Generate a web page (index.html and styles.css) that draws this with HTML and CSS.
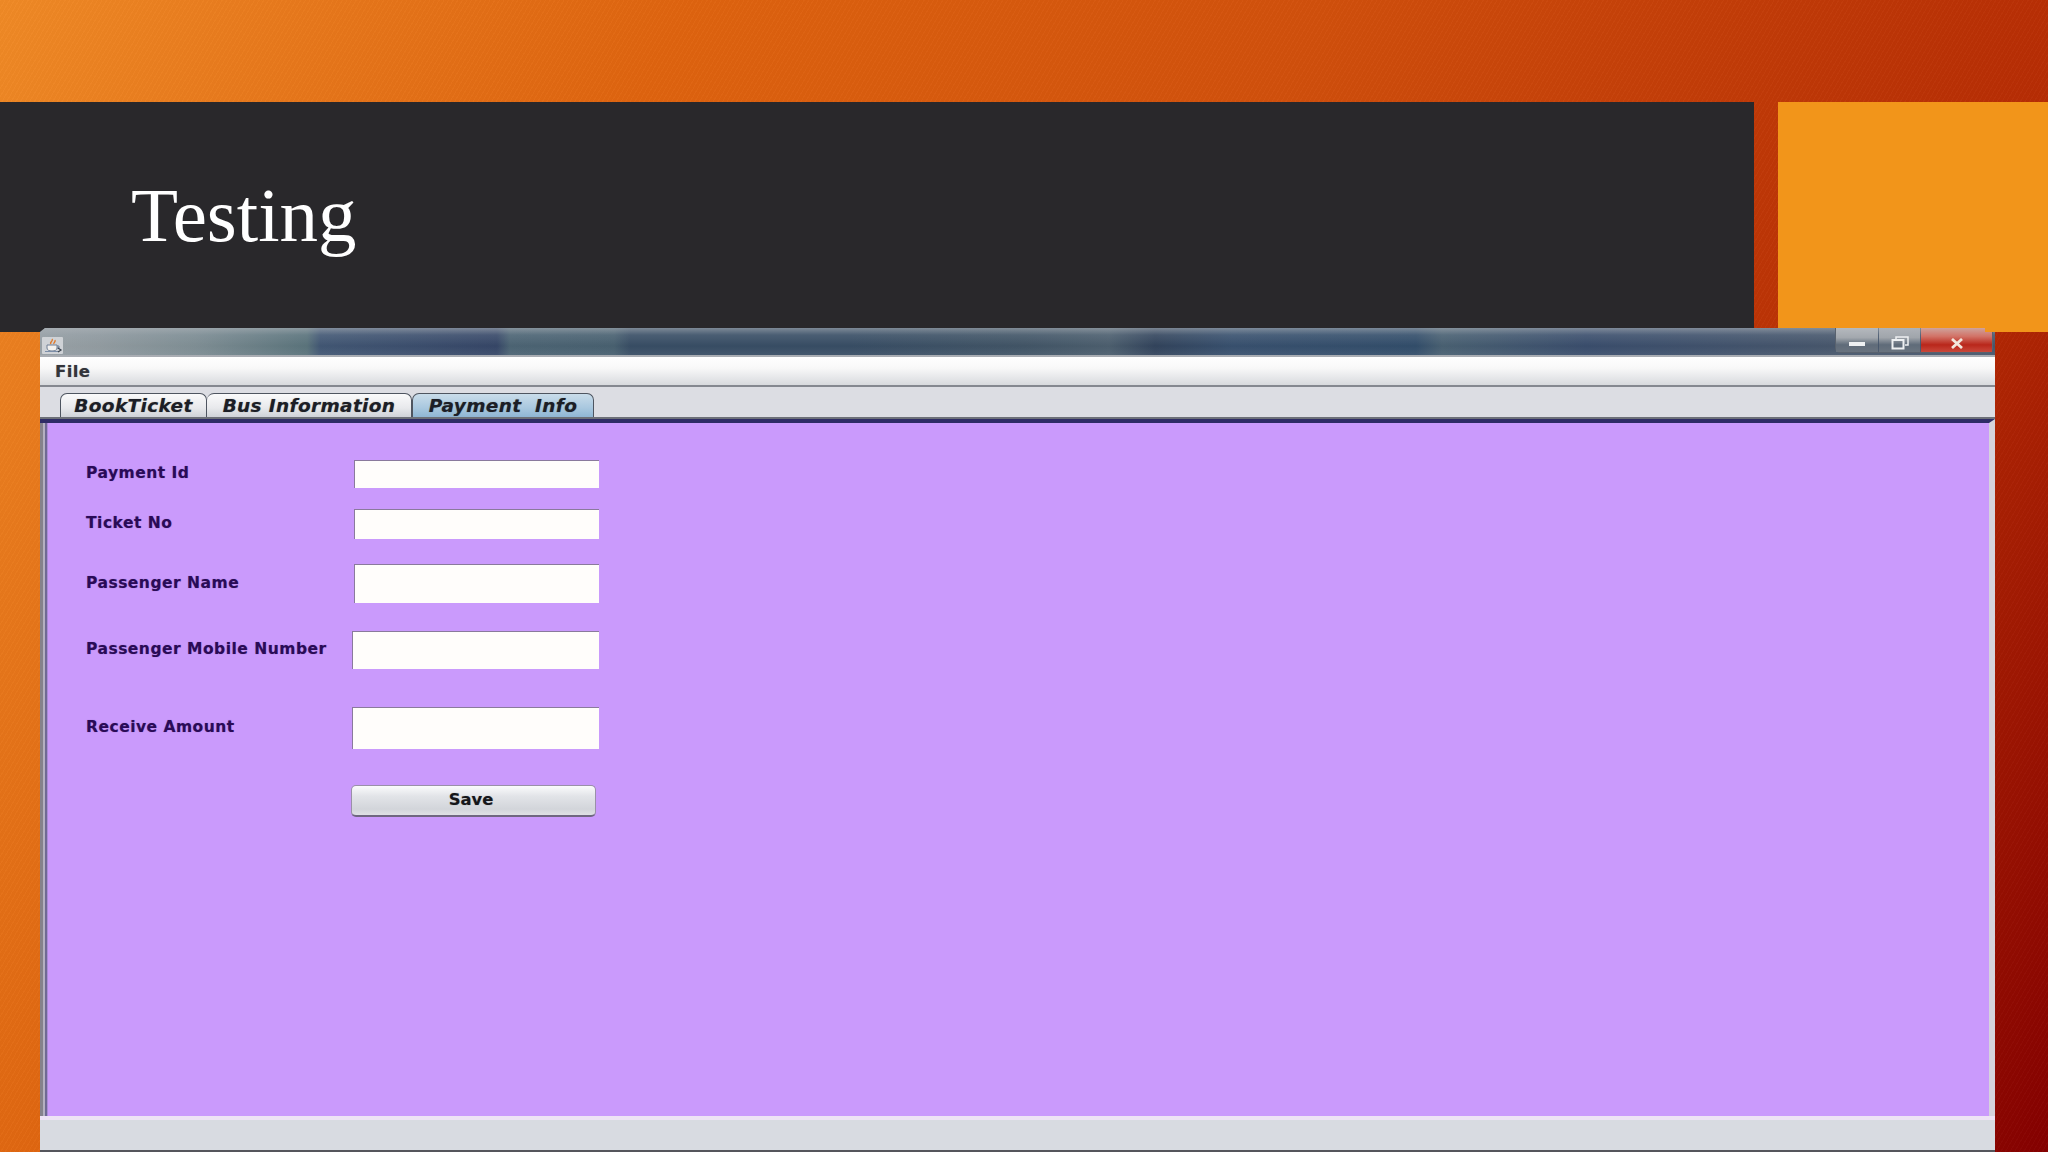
FILE: index.html
```html
<!DOCTYPE html>
<html lang="en">
<head>
<meta charset="utf-8">
<title>Testing</title>
<link rel="stylesheet" href="styles.css">
</head>
<body>
<div class="slide">
  <header class="head">
    <div class="banner"><h1 class="title">Testing</h1></div>
    <div class="accent"></div>
  </header>
  <section class="window">
    <div class="titlebar">
      <svg class="java-icon" viewBox="0 0 21 17" aria-hidden="true">
        <rect x="0" y="0" width="21" height="17" rx="1" fill="#cfd2d6"/>
        <path d="M10 2c2 2-3 3-1 5M13 3c1 2-2 3-1 4" fill="none" stroke="#e07a2c" stroke-width="1.4"/>
        <path d="M5 8h10v3c0 2-2 3-5 3s-5-1-5-3z" fill="#f3f1ee" stroke="#6f7f95" stroke-width="1"/>
        <path d="M15 9h2v2h-2" fill="none" stroke="#6f7f95"/>
        <path d="M3 14.500h13" stroke="#7c8ea8" stroke-width="1"/>
        <path d="M16 11l3 2-3 2" fill="none" stroke="#38404c" stroke-width="1.200"/>
      </svg>
      <div class="controls">
        <div class="ctl ctl-min"><span class="min-glyph"></span></div>
        <div class="ctl ctl-max">
          <svg class="max-glyph" viewBox="0 0 18 14" aria-hidden="true">
            <path d="M5 3V1h12v8h-3" fill="none" stroke="#eef0f2" stroke-width="1.500"/>
            <rect x="1.500" y="4" width="11" height="8.500" fill="none" stroke="#eef0f2" stroke-width="2"/>
          </svg>
        </div>
        <div class="ctl ctl-close">
          <svg class="close-glyph" viewBox="0 0 14 11" aria-hidden="true">
            <path d="M2 1l10 9M12 1L2 10" stroke="#f2e6dc" stroke-width="2.800" fill="none"/>
          </svg>
        </div>
      </div>
    </div>
    <nav class="menubar"><span class="menu-item">File</span></nav>
    <div class="tabstrip">
      <div class="tab tab-book">BookTicket</div>
      <div class="tab tab-bus">Bus Information</div>
      <div class="tab tab-pay">Payment  Info</div>
    </div>
    <div class="tabframe">
      <form class="panel">
        <div class="row row-1"><label class="lbl">Payment Id</label><input class="field" type="text"></div>
        <div class="row row-2"><label class="lbl">Ticket No</label><input class="field" type="text"></div>
        <div class="row row-3"><label class="lbl">Passenger Name</label><input class="field" type="text"></div>
        <div class="row row-4"><label class="lbl lbl-wide">Passenger Mobile Number</label><input class="field" type="text"></div>
        <div class="row row-5"><label class="lbl lbl-wide">Receive Amount</label><input class="field" type="text"></div>
        <div class="row row-6"><span class="lbl lbl-btn"></span><button class="save" type="button">Save</button></div>
      </form>
    </div>
    <div class="statusbar"></div>
  </section>
</div>
</body>
</html>
```
FILE: styles.css
```css
* { box-sizing: border-box; }
html, body { margin: 0; padding: 0; }
body { width: 2048px; height: 1152px; overflow: hidden; }

.slide {
  width: 2048px;
  height: 1152px;
  overflow: hidden;
  display: flex;
  flex-direction: column;
  background:
    repeating-linear-gradient(120deg, rgba(255,255,255,.02) 0 1px, rgba(0,0,0,.015) 1px 4px),
    linear-gradient(118deg, #f08a26 0%, #df640f 26%, #d1500c 50%, #b62b04 80%, #850000 100%);
}

.head { display: flex; gap: 24px; padding-top: 102px; height: 332px; flex: none; }
.banner { width: 1754px; height: 230px; background: #29282b; display: flex; align-items: center; padding-left: 131px; padding-bottom: 3px; }
.title { margin: 0; font: 400 77px/1 "Liberation Serif", serif; color: #fff; }
.accent { flex: 1; height: 230px; background: #f2951a; }

.window {
  width: 1955px;
  height: 824px;
  margin: -4px 0 0 40px;
  display: flex;
  flex-direction: column;
  position: relative;
  flex: none;
}

.titlebar {
  height: 29px;
  flex: none;
  position: relative;
  clip-path: polygon(0 4px, 5px 0, 1945px 0, 1945px 4px, 100% 4px, 100% 100%, 0 100%);
  border-bottom: 2px solid #a9adb3;
  background:
    linear-gradient(180deg, rgba(170,176,182,.6) 0, rgba(140,150,160,.2) 7px, rgba(0,0,0,.05) 18px, rgba(120,130,140,.15) 27px),
    linear-gradient(90deg, #a0a8ad 0, #98a2a7 60px, #84949a 156px, #5e7880 267px, #445a78 280px, #38496b 457px, #4f6878 470px, #4b6474 574px, #3a5068 590px, #3a5068 810px, #44586a 984px, #4f6272 1069px, #34465f 1115px, #3a5372 1193px, #34506e 1376px, #4c6476 1402px, #3c5070 1546px, #4a5a70 1794px);
}

.java-icon { position: absolute; left: 2px; top: 9px; width: 21px; height: 17px; display: block; }

.controls {
  position: absolute;
  right: 2px;
  top: 0;
  width: 158px;
  height: 25px;
  display: flex;
  gap: 1px;
  border: 1px solid #59626e;
  border-top: 0;
  border-radius: 0 0 5px 5px;
}
.ctl { display: flex; align-items: center; justify-content: center; padding-top: 6px; }
.ctl-min { width: 42px; background: linear-gradient(180deg, #b5b9be, #a3a8ae 40%, #5f6b79 70%, #69737f); }
.ctl-max { width: 41px; background: linear-gradient(180deg, #aeb2b8, #a0a5ab 40%, #5f6b79 70%, #6a747f); }
.ctl-close { flex: 1; background: linear-gradient(180deg, #cfa39c, #d27266 35%, #b9271b 70%, #c9483b); }
.min-glyph { width: 16px; height: 4px; background: #eef0f2; margin-top: 2px; }
.max-glyph { width: 18px; height: 14px; display: block; }
.close-glyph { width: 14px; height: 11px; display: block; }

.menubar {
  height: 30px;
  flex: none;
  background: linear-gradient(180deg, #ffffff 0, #f8f8f8 40%, #d8dade 100%);
  border-bottom: 2px solid #858890;
  display: flex;
  align-items: center;
  padding: 2px 0 0 15px;
}
.menu-item { font: 700 16.500px/1 "DejaVu Sans", sans-serif; letter-spacing: .4px; color: #33343a; text-shadow: 0 0 1px rgba(50,50,58,.45); }

.tabstrip {
  height: 32px;
  flex: none;
  background: #dcdde3;
  border-bottom: 2px solid #6d7078;
  display: flex;
  align-items: flex-end;
  padding-left: 20px;
}
.tab {
  height: 24px;
  border: 1px solid #4e5560;
  border-bottom: 0;
  border-left-width: 0;
  border-radius: 7px 7px 0 0;
  font: italic 700 18.500px/24px "DejaVu Sans", sans-serif;
  letter-spacing: .35px;
  color: #1c1e26;
  white-space: pre;
  text-align: center;
  text-shadow: 0 0 1px rgba(28,30,38,.45);
  background: linear-gradient(180deg, #fafafb 0, #e8e9ec 60%, #cfd2d8 100%);
}
.tab-book { width: 147px; border-left-width: 1px; }
.tab-bus { width: 205px; }
.tab-pay { width: 182px; background: linear-gradient(180deg, #c9dcea 0, #a9c8df 60%, #8fb6d4 100%); border-left-width: 1px; }

.tabframe {
  flex: 1;
  min-height: 0;
  display: flex;
  flex-direction: column;
  padding-left: 8px;
  background: linear-gradient(90deg, #85828c 0 3px, #b4b0c0 3px 5px, #6f6a94 5px 7px, #a98cd8 7px 8px);
  border-right: 6px solid #d5d3dc;
  border-top: 4px solid #2e2c66;
}
.panel {
  flex: 1;
  background: #ca9afc;
  padding: 37px 0 0 38px;
  display: flex;
  flex-direction: column;
}

.row { display: flex; align-items: center; flex: none; }
.row-1 { height: 28px; }
.row-2 { height: 30px; margin-top: 21px; }
.row-3 { height: 39px; margin-top: 25px; }
.row-4 { height: 38px; margin-top: 28px; }
.row-5 { height: 42px; margin-top: 38px; }
.row-6 { height: 32px; margin-top: 36px; }

.lbl { width: 268px; font: 700 15.500px/1 "DejaVu Sans", sans-serif; letter-spacing: .5px; color: #2a0b57; flex: none; text-shadow: 0 0 1px rgba(42,11,87,.4); }
.lbl-wide { width: 266px; }
.lbl-btn { width: 265px; }

.field {
  width: 245px;
  height: 100%;
  margin: 0;
  padding: 0;
  background: #fffdfb;
  border: 0;
  border-top: 1px solid #8a7a9c;
  border-left: 1px solid #8a7a9c;
  outline: 0;
}
.lbl-wide + .field { width: 247px; }

.save {
  width: 245px;
  height: 100%;
  margin: 0;
  padding: 0 5px 0 0;
  font: 700 16.400px/1 "DejaVu Sans", sans-serif;
  color: #15161a;
  background: linear-gradient(180deg, #fbfbfc 0, #e2e4e8 35%, #d2d5da 80%, #dfe1e5 100%);
  border: 1px solid #9a90a8;
  border-bottom: 2px solid #6f6780;
  border-radius: 5px;
  text-shadow: 0 0 1px rgba(21,22,26,.4);
}

.statusbar {
  height: 36px;
  flex: none;
  background: #d8dbe1;
  border-top: 4px solid #eee3f5;
  border-bottom: 2px solid #55565c;
}
```
